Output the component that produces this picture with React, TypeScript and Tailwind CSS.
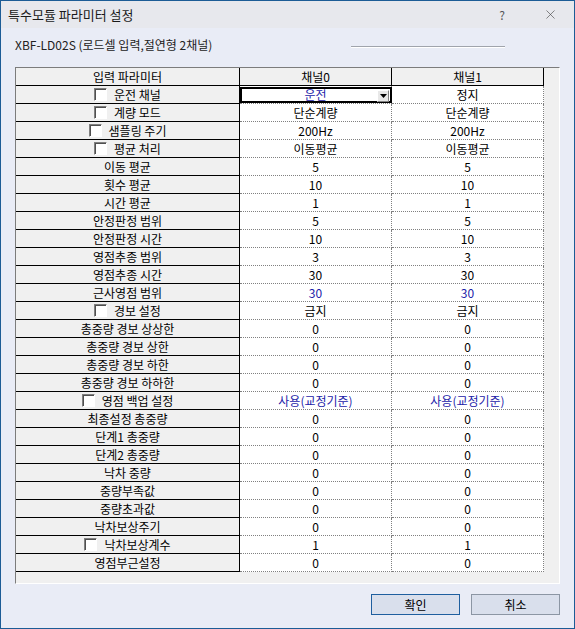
import { X } from "lucide-react";

type Row = {
  label: string;
  check?: boolean;
  v0: string;
  v1: string;
  blue?: boolean;
};

const rows: Row[] = [
  { label: "운전 채널", check: true, v0: "운전", v1: "정지" },
  { label: "계량 모드", check: true, v0: "단순계량", v1: "단순계량" },
  { label: "샘플링 주기", check: true, v0: "200Hz", v1: "200Hz" },
  { label: "평균 처리", check: true, v0: "이동평균", v1: "이동평균" },
  { label: "이동 평균", v0: "5", v1: "5" },
  { label: "횟수 평균", v0: "10", v1: "10" },
  { label: "시간 평균", v0: "1", v1: "1" },
  { label: "안정판정 범위", v0: "5", v1: "5" },
  { label: "안정판정 시간", v0: "10", v1: "10" },
  { label: "영점추종 범위", v0: "3", v1: "3" },
  { label: "영점추종 시간", v0: "30", v1: "30" },
  { label: "근사영점 범위", v0: "30", v1: "30", blue: true },
  { label: "경보 설정", check: true, v0: "금지", v1: "금지" },
  { label: "총중량 경보 상상한", v0: "0", v1: "0" },
  { label: "총중량 경보 상한", v0: "0", v1: "0" },
  { label: "총중량 경보 하한", v0: "0", v1: "0" },
  { label: "총중량 경보 하하한", v0: "0", v1: "0" },
  { label: "영점 백업 설정", check: true, v0: "사용(교정기준)", v1: "사용(교정기준)", blue: true },
  { label: "최종설정 총중량", v0: "0", v1: "0" },
  { label: "단계1 총중량", v0: "0", v1: "0" },
  { label: "단계2 총중량", v0: "0", v1: "0" },
  { label: "낙차 중량", v0: "0", v1: "0" },
  { label: "중량부족값", v0: "0", v1: "0" },
  { label: "중량초과값", v0: "0", v1: "0" },
  { label: "낙차보상주기", v0: "0", v1: "0" },
  { label: "낙차보상계수", check: true, v0: "1", v1: "1" },
  { label: "영점부근설정", v0: "0", v1: "0" },
];

function CheckBox() {
  return (
    <span className="h-[13px] w-[13px] shrink-0 border border-t-[#808080] border-l-[#808080] border-r-[#ffffff] border-b-[#ffffff] bg-white shadow-[inset_1px_1px_0_#505050]" />
  );
}

function ValueCell({ text, blue, selected }: { text: string; blue?: boolean; selected?: boolean }) {
  return (
    <div
      className={`relative flex h-[18px] items-center justify-center border-r border-b border-dotted border-[#808080] bg-white ${
        blue ? "text-[#1c22a8]" : "text-black"
      }`}
    >
      <span className={selected ? "underline underline-offset-2" : ""}>{text}</span>
      {selected && (
        <div className="absolute top-[1px] right-[-1px] bottom-0 left-0 border-2 border-black">
          <div className="absolute top-[1px] right-[1px] flex h-[12px] w-[12px] items-center justify-center border border-t-white border-l-white border-r-[#808080] border-b-[#808080] bg-[#e8e8e8]">
            <svg width="7" height="4" viewBox="0 0 7 4">
              <path d="M0 0h7L3.5 4z" fill="#000" />
            </svg>
          </div>
        </div>
      )}
    </div>
  );
}

export default function App() {
  return (
    <div
      className="flex h-[629px] w-[575px] flex-col border border-[#1c5c96] bg-[#e9ecf6] text-[12px] leading-none text-black"
      style={{ fontFamily: '"Noto Sans CJK KR", "Noto Sans", sans-serif' }}
    >
      {/* title bar */}
      <div className="flex h-[27px] shrink-0 items-center bg-[#e7e8ed] pl-[7px] pr-[16px]">
        <span className="text-[13px] text-[#1a1a1a]">특수모듈 파라미터 설정</span>
        <span className="ml-auto mr-[38px] text-[12px] text-[#555]">?</span>
        <X size={15} strokeWidth={1} className="text-[#444]" />
      </div>

      <div className="flex flex-1 flex-col px-[14px] pt-[8px]">
        <div className="flex h-[18px] items-center">
          <span className="text-[12px] text-[#222]">XBF-LD02S (로드셀 입력,절연형 2채널)</span>
          <span className="ml-auto mr-[55px] mt-[4px] h-[2px] w-[154px] border-t border-b border-t-[#a0a4ac] border-b-white" />
        </div>

        <div className="mt-[13px] h-[517px] w-[545px] border border-t-[#7c7c7c] border-l-[#7c7c7c] border-r-white border-b-white bg-[#f0f0f0]">
          <div className="grid grid-cols-[224px_152px_152px]">
            <div className="flex h-[18px] items-center justify-center border-r border-b border-black">
              입력 파라미터
            </div>
            <div className="flex h-[18px] items-center justify-center border-r border-b border-black">
              채널0
            </div>
            <div className="flex h-[18px] items-center justify-center border-r border-b border-black">
              채널1
            </div>
            {rows.map((r, i) => (
              <div key={r.label} className="contents">
                <div className="flex h-[18px] items-center justify-center gap-[7px] border-r border-b border-black">
                  {r.check && <CheckBox />}
                  <span>{r.label}</span>
                </div>
                <ValueCell text={r.v0} blue={r.blue || i === 0} selected={i === 0} />
                <ValueCell text={r.v1} blue={r.blue} />
              </div>
            ))}
          </div>
        </div>

        <div className="mt-[10px] flex justify-end gap-[11px] pr-[0px]">
          <button className="flex h-[21px] w-[89px] items-center justify-center border border-[#1f5f9f] bg-[#d9dfec] text-[12px]">
            확인
          </button>
          <button className="flex h-[21px] w-[89px] items-center justify-center border border-[#8c96a4] bg-[#d9dfec] text-[12px]">
            취소
          </button>
        </div>
      </div>
    </div>
  );
}
